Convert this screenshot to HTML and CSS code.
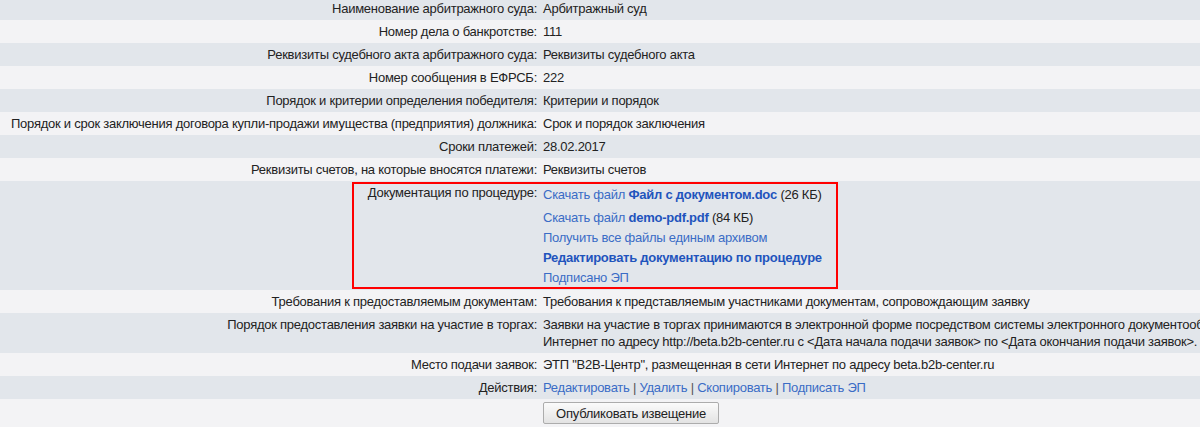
FILE: index.html
```html
<!DOCTYPE html>
<html lang="ru">
<head>
    <meta charset="UTF-8">
    <title>Извещение о торгах</title>
    <link rel="stylesheet" href="styles.css">
</head>
<body>
    <div class="page">
        <table class="details">
            <tr class="odd">
                <td class="label">Наименование арбитражного суда:</td>
                <td class="value">Арбитражный суд</td>
            </tr>
            <tr class="even">
                <td class="label">Номер дела о банкротстве:</td>
                <td class="value">111</td>
            </tr>
            <tr class="odd">
                <td class="label">Реквизиты судебного акта арбитражного суда:</td>
                <td class="value">Реквизиты судебного акта</td>
            </tr>
            <tr class="even">
                <td class="label">Номер сообщения в ЕФРСБ:</td>
                <td class="value">222</td>
            </tr>
            <tr class="odd">
                <td class="label">Порядок и критерии определения победителя:</td>
                <td class="value">Критерии и порядок</td>
            </tr>
            <tr class="even">
                <td class="label">Порядок и срок заключения договора купли-продажи имущества (предприятия) должника:</td>
                <td class="value">Срок и порядок заключения</td>
            </tr>
            <tr class="odd">
                <td class="label">Сроки платежей:</td>
                <td class="value">28.02.2017</td>
            </tr>
            <tr class="even">
                <td class="label">Реквизиты счетов, на которые вносятся платежи:</td>
                <td class="value">Реквизиты счетов</td>
            </tr>
            <!-- документация -->
            <tr class="odd">
                <td class="label">Документация по процедуре:</td>
                <td class="value docs">
                    <div class="file"><a href="#">Скачать файл <b>Файл с документом.doc</b></a> (26 КБ)</div>
                    <div class="file"><a href="#">Скачать файл <b>demo-pdf.pdf</b></a> (84 КБ)</div>
                    <div class="doc-link"><a href="#">Получить все файлы единым архивом</a></div>
                    <div class="doc-link"><a href="#" class="strong">Редактировать документацию по процедуре</a></div>
                    <div class="doc-link"><a href="#">Подписано ЭП</a></div>
                </td>
            </tr>
            <tr class="even">
                <td class="label">Требования к предоставляемым документам:</td>
                <td class="value">Требования к представляемым участниками документам, сопровождающим заявку</td>
            </tr>
            <tr class="odd">
                <td class="label">Порядок предоставления заявки на участие в торгах:</td>
                <td class="value nowrap">Заявки на участие в торгах принимаются в электронной форме посредством системы электронного документооборота на сайте ЭТП "B2B-Центр", размещенной в сети<br>Интернет по адресу http://beta.b2b-center.ru с &lt;Дата начала подачи заявок&gt; по &lt;Дата окончания подачи заявок&gt;.</td>
            </tr>
            <tr class="even">
                <td class="label">Место подачи заявок:</td>
                <td class="value">ЭТП "B2B-Центр", размещенная в сети Интернет по адресу beta.b2b-center.ru</td>
            </tr>
            <tr class="odd">
                <td class="label">Действия:</td>
                <td class="value actions">
                    <a href="#">Редактировать</a> | <a href="#">Удалить</a> | <a href="#">Скопировать</a> | <a href="#">Подписать ЭП</a>
                </td>
            </tr>
            <tr class="even">
                <td class="label"></td>
                <td class="value">
                    <button type="button" class="btn">Опубликовать извещение</button>
                </td>
            </tr>
        </table>

        <!-- рамка выделения поверх блока документации -->
        <div class="highlight"></div>
    </div>
</body>
</html>
```

FILE: styles.css
```css
body {
    margin: 0;
    padding: 0;
    font-family: "Liberation Sans", Arial, sans-serif;
    font-size: 13px;
    letter-spacing: -0.25px;
    color: #222;
    background-color: #f3f3f5;
}
.page {
    position: relative;
    width: 100%;
    height: 427px;
    overflow: hidden;
}
.details {
    width: 100%;
    margin-top: -3px;
    border-collapse: collapse;
    border-spacing: 0;
}
.details td {
    padding: 3px;
    line-height: 17px;
    vertical-align: top;
}
.details .label {
    width: 540px;
    min-width: 540px;
    box-sizing: border-box;
    text-align: right;
    white-space: nowrap;
}
.odd {
    background-color: #e2e6eb;
}
.even {
    background-color: #f3f3f5;
}
.nowrap {
    white-space: nowrap;
}
a {
    color: #3a6cc6;
    text-decoration: none;
}
a b,
a.strong {
    color: #1f54bd;
    font-weight: bold;
}
.details .docs {
    padding: 1px 3px 2px;
}
.docs .file {
    margin-top: 3px;
    line-height: 20px;
}
.docs .doc-link {
    line-height: 20px;
}
.actions {
    color: #555;
}
.btn {
    width: 176px;
    height: 22px;
    margin: 0;
    padding: 0 6px;
    font-family: "Liberation Sans", Arial, sans-serif;
    font-size: 13px;
    letter-spacing: -0.25px;
    color: #222;
    background: linear-gradient(#fbfbfb, #e3e3e3);
    border: 1px solid #acacac;
    border-radius: 2px;
}
.highlight {
    position: absolute;
    left: 352px;
    top: 182px;
    width: 486px;
    height: 107px;
    box-sizing: border-box;
    border: 2px solid #f00;
    pointer-events: none;
}
```
